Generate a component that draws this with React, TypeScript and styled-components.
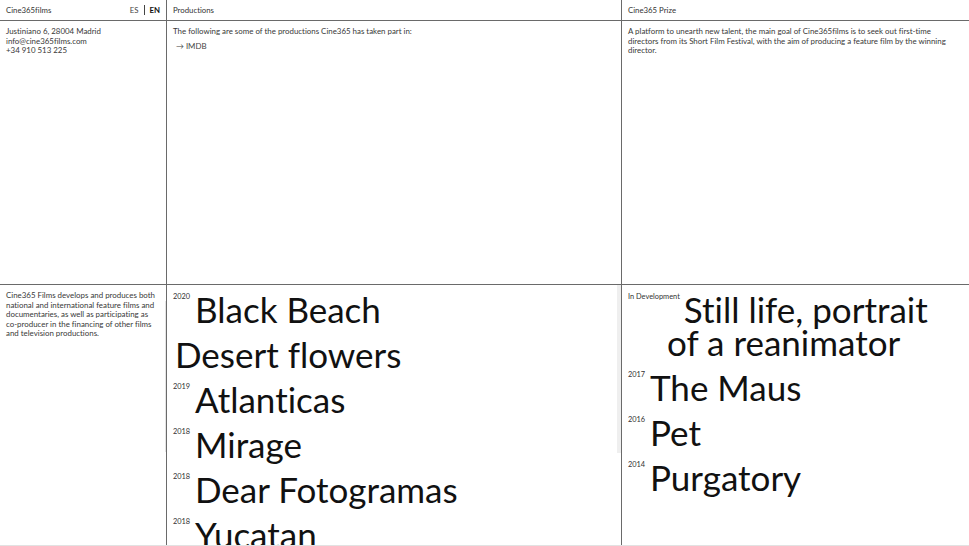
import React from "react";
import styled, { createGlobalStyle } from "styled-components";

const Global = createGlobalStyle`
  html, body { margin: 0; padding: 0; background: #fff; overflow: hidden; }
  body {
    font-family: Lato, "Liberation Sans", sans-serif;
    color: #2b2b2b;
    font-variant-ligatures: none;
    font-feature-settings: "liga" 0, "clig" 0;
  }
  * { box-sizing: border-box; }
`;

const Page = styled.div`
  width: 969px;
  height: 546px;
  display: grid;
  grid-template-columns: 167px 455px 1fr;
  grid-template-rows: 21px 264px 1fr;
  border-bottom: 1px solid #e2e2e2;
  overflow: hidden;
`;

const Cell = styled.div<{ $last?: boolean; $bottom?: boolean }>`
  position: relative;
  border-right: ${(p) => (p.$last ? "none" : "1px solid #6a6a6a")};
  border-bottom: ${(p) => (p.$bottom ? "none" : "1px solid #6a6a6a")};
  padding: 0 6px;
  overflow: hidden;
  min-width: 0;
`;

const HeaderCell = styled(Cell)`
  display: flex;
  align-items: center;
  justify-content: space-between;
  font-size: 7.8px;
  color: #333;
`;

const Small = styled.div<{ $top?: number }>`
  font-size: 7.9px;
  line-height: 9.6px;
  color: #383838;
  padding-top: ${(p) => p.$top ?? 5}px;
`;

const Para = styled.p<{ $gap?: number }>`
  margin: 0 0 ${(p) => p.$gap ?? 0}px;
`;

const Lang = styled.div`
  display: flex;
  align-items: center;
  gap: 5px;
`;

const LangItem = styled.span<{ $active?: boolean }>`
  font-weight: ${(p) => (p.$active ? 700 : 400)};
  color: ${(p) => (p.$active ? "#111" : "#444")};
`;

const Sep = styled.span`
  width: 1px;
  height: 10px;
  background: #444;
`;

const LinkRow = styled.div`
  padding-left: 3px;
  color: #444;
`;

const List = styled.div`
  padding-top: 8px;
`;

const Entry = styled.p<{ $pad?: number; $indent?: number }>`
  margin: 0 0 12px;
  padding-left: ${(p) => p.$pad ?? 0}px;
  text-indent: ${(p) => p.$indent ?? 0}px;
  font-size: 35px;
  line-height: 33px;
  color: #111;
`;

const Year = styled.span`
  display: inline-block;
  vertical-align: top;
  font-size: 7.4px;
  line-height: 8px;
  color: #333;
  text-indent: 0;
  min-width: 18px;
  margin-right: 4px;
`;

const Title = styled.span``;

const ScrollTrack = styled.div<{ $tone: string; $top: number; $h: number; $w: number }>`
  position: absolute;
  right: 0;
  top: ${(p) => p.$top}px;
  height: ${(p) => p.$h}px;
  width: ${(p) => p.$w}px;
  background: ${(p) => p.$tone};
`;

type Film = { year?: string; title: string; pad?: number; indent?: number };

const productions: Film[] = [
  { year: "2020", title: "Black Beach" },
  { title: "Desert flowers", pad: 2 },
  { year: "2019", title: "Atlanticas" },
  { year: "2018", title: "Mirage" },
  { year: "2018", title: "Dear Fotogramas" },
  { year: "2018", title: "Yucatan" },
];

const prize: Film[] = [
  { year: "In Development", title: "Still life, portrait of a reanimator", pad: 39, indent: -39 },
  { year: "2017", title: "The Maus" },
  { year: "2016", title: "Pet" },
  { year: "2014", title: "Purgatory" },
];

const FilmList = ({ items }: { items: Film[] }) => (
  <List>
    {items.map((f, i) => (
      <Entry key={i} $pad={f.pad} $indent={f.indent}>
        {f.year ? <Year>{f.year}</Year> : null}
        <Title>{f.title}</Title>
      </Entry>
    ))}
  </List>
);

export default function App() {
  return (
    <>
      <Global />
      <Page>
        <HeaderCell>
          <span>Cine365films</span>
          <Lang>
            <LangItem>ES</LangItem>
            <Sep />
            <LangItem $active>EN</LangItem>
          </Lang>
        </HeaderCell>
        <HeaderCell>
          <span>Productions</span>
        </HeaderCell>
        <HeaderCell $last>
          <span>Cine365 Prize</span>
        </HeaderCell>

        <Cell>
          <Small $top={6}>
            <Para>Justiniano 6, 28004 Madrid</Para>
            <Para>info@cine365films.com</Para>
            <Para>+34 910 513 225</Para>
          </Small>
        </Cell>
        <Cell>
          <Small $top={6}>
            <Para $gap={5}>The following are some of the productions Cine365 has taken part in:</Para>
            <LinkRow>→ IMDB</LinkRow>
          </Small>
        </Cell>
        <Cell $last>
          <Small $top={6}>
            <Para>
              A platform to unearth new talent, the main goal of Cine365films is to seek out first-time
              directors from its Short Film Festival, with the aim of producing a feature film by the winning
              director.
            </Para>
          </Small>
        </Cell>

        <Cell $bottom>
          <Small $top={6}>
            <Para>
              Cine365 Films develops and produces both national and international feature films and
              documentaries, as well as participating as co-producer in the financing of other films
              and television productions.
            </Para>
          </Small>
          <ScrollTrack $tone="#e4e4e4" $top={16} $h={151} $w={1} />
        </Cell>
        <Cell $bottom>
          <FilmList items={productions} />
          <ScrollTrack $tone="#efefef" $top={0} $h={168} $w={4} />
        </Cell>
        <Cell $last $bottom>
          <FilmList items={prize} />
        </Cell>
      </Page>
    </>
  );
}
